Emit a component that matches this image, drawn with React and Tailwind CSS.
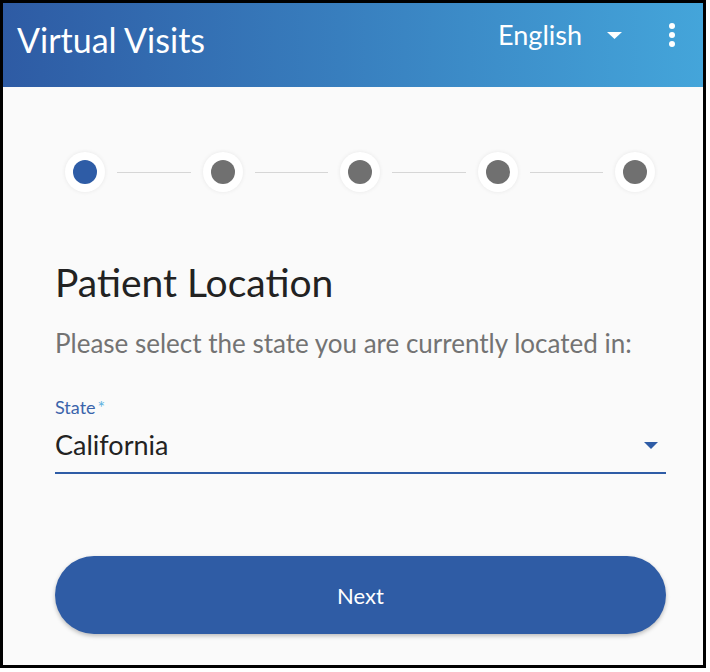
import { useState } from 'react';

const steps = [0, 1, 2, 3, 4];

function Stepper({ active }) {
  return (
    <div className="flex items-center pl-[10px] pr-[11px]">
      {steps.map((step) => (
        <div key={step} className={`flex items-center ${step === 0 ? '' : 'flex-1'}`}>
          {step > 0 ? <div className="mx-3 h-px flex-1 bg-[#d6d6d6]" /> : null}
          <div className="grid h-10 w-10 place-items-center rounded-full bg-white shadow-[0_0_4px_rgba(0,0,0,0.08)]">
            <div
              className={`h-6 w-6 rounded-full ${
                step === active ? 'bg-[#2e5ca6]' : 'bg-[#707070]'
              }`}
            />
          </div>
        </div>
      ))}
    </div>
  );
}

export default function App() {
  const [state] = useState('California');

  return (
    <div className="h-[672px] w-[710px] bg-white font-['Lato','Noto_Sans',sans-serif]">
      <div className="flex h-[668px] w-[706px] flex-col border-[3px] border-black bg-[#fafafa]">
        <header className="flex h-[84px] shrink-0 items-start bg-gradient-to-r from-[#2e5ba4] to-[#44a5da] pl-[14px] pr-[28px] pt-[17px]">
          <h1 className="text-[34px] leading-[40px] text-white">Virtual Visits</h1>
          <div className="ml-auto mt-[-1px] flex items-center">
            <button className="flex items-center text-[27px] leading-[32px] text-white" type="button">
              English
              <svg className="ml-[25px] h-[7px] w-[15px]" viewBox="0 0 15 7">
                <path d="M0 0h15L7.5 7z" fill="#fff" />
              </svg>
            </button>
            <button className="ml-[47px] flex flex-col gap-[3px]" type="button">
              <span className="h-[6px] w-[6px] rounded-full bg-white" />
              <span className="h-[6px] w-[6px] rounded-full bg-white" />
              <span className="h-[6px] w-[6px] rounded-full bg-white" />
            </button>
          </div>
        </header>

        <main className="flex flex-1 flex-col pl-[52px] pr-[37px]">
          <div className="pt-[65px]">
            <Stepper active={0} />
          </div>

          <h2 className="mt-[67px] text-[39px] leading-[47px] text-[#222]">Patient Location</h2>
          <p className="mt-[22px] text-[26px] leading-[31px] text-[#737373]">
            Please select the state you are currently located in:
          </p>

          <div className="mt-[37px]">
            <label className="block text-[18px] leading-[22px] text-[#3a64ab]">
              State<span className="ml-[2px] text-[#5fb2e0]">*</span>
            </label>
            <div className="mt-[11px] flex items-center border-b-2 border-[#2e5ca6] pb-[11px] pr-[8px]">
              <span className="text-[27px] leading-[32px] text-[#222]">{state}</span>
              <svg className="ml-auto h-[7px] w-[14px]" viewBox="0 0 14 7">
                <path d="M0 0h14L7 7z" fill="#2e5ca6" />
              </svg>
            </div>
          </div>

          <button
            className="mt-[82px] h-[78px] w-full rounded-full bg-[#2f5ca5] text-[22px] text-white shadow-[0_2px_4px_rgba(0,0,0,0.25)]"
            type="button"
          >
            Next
          </button>
        </main>
      </div>
    </div>
  );
}
